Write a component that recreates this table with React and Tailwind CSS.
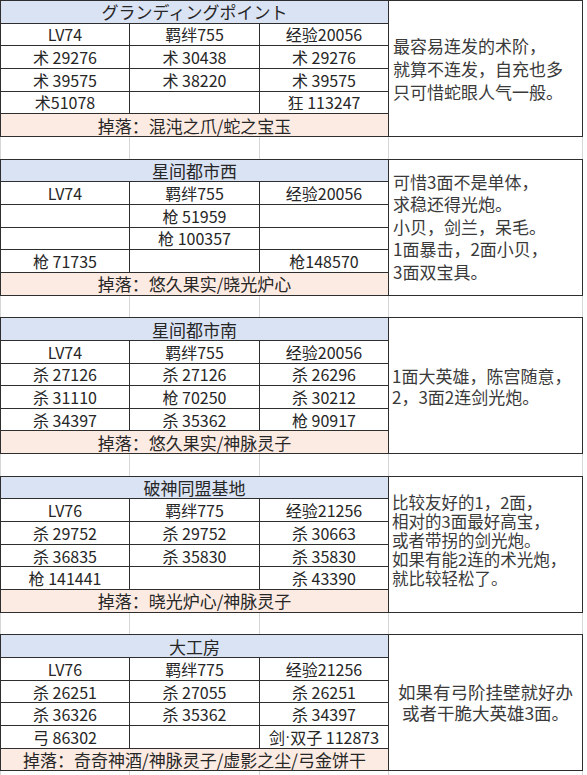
import React from "react";

const blocks = [
  {
    title: "グランディングポイント",
    rows: [
      ["LV74", "羁绊755", "经验20056"],
      ["术 29276", "术 30438", "术 29276"],
      ["术 39575", "术 38220", "术 39575"],
      ["术51078", "", "狂 113247"],
    ],
    drop: "掉落：混沌之爪/蛇之宝玉",
    note: ["最容易连发的术阶，", "就算不连发，自充也多", "只可惜蛇眼人气一般。"],
    noteClass: "text-[17px] leading-[23.3px] text-left pl-[4px]",
  },
  {
    title: "星间都市西",
    rows: [
      ["LV74", "羁绊755", "经验20056"],
      ["", "枪 51959", ""],
      ["", "枪 100357", ""],
      ["枪 71735", "", "枪148570"],
    ],
    drop: "掉落：悠久果实/晓光炉心",
    note: ["可惜3面不是单体，", "求稳还得光炮。", "小贝，剑兰，呆毛。", "1面暴击，2面小贝，", "3面双宝具。"],
    noteClass: "text-[17px] leading-[22.5px] text-left pl-[4px]",
  },
  {
    title: "星间都市南",
    rows: [
      ["LV74", "羁绊755", "经验20056"],
      ["杀 27126", "杀 27126", "杀 26296"],
      ["杀 31110", "枪 70250", "杀 30212"],
      ["杀 34397", "杀 35362", "枪 90917"],
    ],
    drop: "掉落：悠久果实/神脉灵子",
    note: ["1面大英雄，陈宫随意，", "2，3面2连剑光炮。"],
    noteClass: "text-[17px] leading-[21px] text-left pl-[3px]",
  },
  {
    title: "破神同盟基地",
    rows: [
      ["LV76", "羁绊775", "经验21256"],
      ["杀 29752", "杀 29752", "杀 30663"],
      ["杀 36835", "杀 35830", "杀 35830"],
      ["枪 141441", "", "杀 43390"],
    ],
    drop: "掉落：晓光炉心/神脉灵子",
    note: ["比较友好的1，2面，", "相对的3面最好高宝，", "或者带拐的剑光炮。", "如果有能2连的术光炮，", "就比较轻松了。"],
    noteClass: "text-[16.5px] leading-[19px] text-left pl-[3px] pb-[8px]",
  },
  {
    title: "大工房",
    rows: [
      ["LV76", "羁绊775", "经验21256"],
      ["杀 26251", "杀 27055", "杀 26251"],
      ["杀 36326", "杀 35362", "杀 34397"],
      ["弓 86302", "", "dot"],
    ],
    drop: "掉落：奇奇神酒/神脉灵子/虚影之尘/弓金饼干",
    note: ["如果有弓阶挂壁就好办", "或者干脆大英雄3面。"],
    noteClass: "text-[17.5px] leading-[20.7px] text-center",
  },
];

function CellText({ c }) {
  if (c === "dot") {
    return (
      <>
        剑<span className="font-['Liberation_Sans',sans-serif]">·</span>双子 112873
      </>
    );
  }
  return c;
}

function Block({ b }) {
  return (
    <div className="grid w-[583px] grid-cols-[128px_129px_128px_193px] grid-rows-[repeat(6,21.67px)] gap-px bg-[#2e2e2e] p-px">
      <div className="col-span-3 col-start-1 row-start-1 flex items-center justify-center bg-[#dae3f3] text-[17px] leading-none text-[#262626]">
        {b.title}
      </div>
      <div className="col-start-4 row-start-1 row-span-6 flex items-center bg-white">
        <div className={"w-full text-[#3a3a3a] " + b.noteClass}>
          {b.note.map((l, i) => (
            <div key={i} className="whitespace-nowrap">{l}</div>
          ))}
        </div>
      </div>
      {b.rows.flat().map((c, i) => (
        <div
          key={i}
          className="flex items-center justify-center bg-white text-[16px] leading-none whitespace-nowrap text-[#262626]"
        >
          <CellText c={c} />
        </div>
      ))}
      <div className="col-span-3 col-start-1 row-start-6 flex items-center justify-center bg-[#fcebe2] text-[17px] leading-none whitespace-nowrap text-[#262626]">
        {b.drop}
      </div>
    </div>
  );
}

function Gap() {
  return (
    <div className="grid h-[21.67px] w-[583px] grid-cols-[128px_129px_128px_193px] gap-px bg-[#d6d6d6] px-px">
      <div className="bg-white" />
      <div className="bg-white" />
      <div className="bg-white" />
      <div className="bg-white" />
    </div>
  );
}

export default function App() {
  return (
    <div className="h-[775px] w-[587px] overflow-hidden bg-white font-['Noto_Sans_CJK_SC','Noto_Sans_CJK_JP',sans-serif]">
      {blocks.map((b, i) => (
        <React.Fragment key={i}>
          <Block b={b} />
          <Gap />
        </React.Fragment>
      ))}
    </div>
  );
}
